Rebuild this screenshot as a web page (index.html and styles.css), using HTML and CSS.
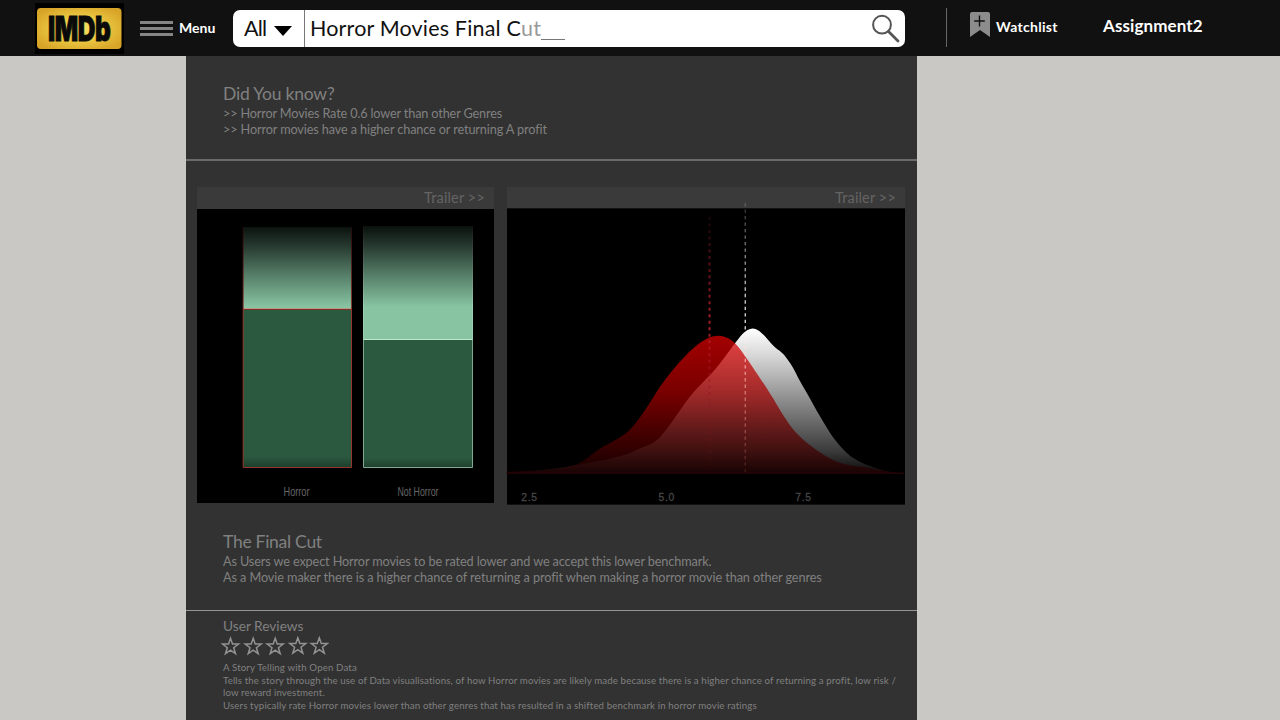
FILE: index.html
```
<!DOCTYPE html>
<html lang="en">
<head>
    <meta charset="UTF-8">
    <meta name="viewport" content="width=device-width, initial-scale=1.0">
    <title>Horror Movies Final Cut</title>
    <link rel="stylesheet" href="styles.css">
</head>
<body>
    <div class="header">
        <svg class="logo" width="89" height="51" viewBox="0 0 89 51">
            <defs>
                <radialGradient id="gold" cx="0.5" cy="0.5" r="0.6">
                    <stop offset="0" stop-color="#f8e468"/>
                    <stop offset="0.5" stop-color="#ebc842"/>
                    <stop offset="1" stop-color="#d8a428"/>
                </radialGradient>
            </defs>
            <rect width="89" height="51" fill="#000"/>
            <rect x="2" y="5" width="84.5" height="41" rx="4" fill="url(#gold)"/>
            <text class="logo-text" transform="translate(13 37.5) scale(0.72 1)">IMDb</text>
        </svg>
        <div class="menu">
            <div class="menu-icon"><span></span><span></span><span></span></div>
            <span class="menu-label">Menu</span>
        </div>
        <div class="search">
            <div class="search-type">
                <span class="search-all">All</span>
                <svg width="18" height="10" viewBox="0 0 18 10"><path d="M0 0H18L9 10Z" fill="#000"/></svg>
            </div>
            <div class="search-text"><span>Horror Movies Final C</span><span class="typing">ut</span><span class="cursor"></span></div>
            <svg class="search-icon" width="30" height="30" viewBox="0 0 30 30" fill="none" stroke="#555" stroke-linecap="round">
                <circle cx="11" cy="10.7" r="8.9" stroke-width="2"/>
                <path d="M17.5 17.5L27 27" stroke-width="2.8"/>
            </svg>
        </div>
        <div class="divider"></div>
        <div class="watchlist">
            <svg width="20" height="25" viewBox="0 0 20 25">
                <path d="M2 0H18Q20 0 20 2V25L10 18L0 25V2Q0 0 2 0Z" fill="#8c8c8c"/>
                <path d="M9.5 3.5V14.5M4.2 9H14.8" stroke="#111" stroke-width="1.4"/>
            </svg>
            <span class="watchlist-label">Watchlist</span>
        </div>
        <span class="account">Assignment2</span>
    </div>

    <div class="content">
        <div class="facts">
            <h2 class="title did">Did You know?</h2>
            <p class="line fact1">&gt;&gt; Horror Movies Rate 0.6 lower than other Genres</p>
            <p class="line fact2">&gt;&gt; Horror movies have a higher chance or returning A profit</p>
        </div>

        <div class="trailers">
            <div class="trailer trailer-bars">
                <div class="trailer-head"><span>Trailer &gt;&gt;</span></div>
                <svg class="chart" width="297" height="294" viewBox="0 0 297 294">
                    <defs>
                        <linearGradient id="fade" gradientUnits="userSpaceOnUse" x1="0" y1="17" x2="0" y2="98">
                            <stop offset="0" stop-color="#0a110d"/>
                            <stop offset="0.25" stop-color="#273a30"/>
                            <stop offset="0.6" stop-color="#557d67"/>
                            <stop offset="1" stop-color="#88c4a2"/>
                        </linearGradient>
                        <linearGradient id="redEdge" gradientUnits="userSpaceOnUse" x1="0" y1="17" x2="0" y2="98">
                            <stop offset="0" stop-color="#200a0a"/>
                            <stop offset="1" stop-color="#8c3a32"/>
                        </linearGradient>
                        <linearGradient id="whiteEdge" gradientUnits="userSpaceOnUse" x1="0" y1="17" x2="0" y2="98">
                            <stop offset="0" stop-color="#111"/>
                            <stop offset="1" stop-color="#a0d0b4"/>
                        </linearGradient>
                        <linearGradient id="base" x1="0" y1="0" x2="0" y2="1">
                            <stop offset="0.93" stop-color="#2b593f"/>
                            <stop offset="1" stop-color="#1f402d"/>
                        </linearGradient>
                    </defs>
                    <rect width="297" height="294" fill="#000"/>
                    <!-- horror -->
                    <rect x="46" y="18" width="109" height="82" fill="url(#fade)"/>
                    <rect x="46" y="101" width="109" height="157" fill="url(#base)"/>
                    <path d="M46 99.5H155" stroke="#b49a80"/>
                    <path d="M46 100.5H155" stroke="#7c302a"/>
                    <rect x="45.7" y="18" width="1" height="82" fill="url(#redEdge)"/>
                    <rect x="154" y="18" width="1" height="82" fill="url(#redEdge)"/>
                    <path d="M46.2 100V258.5H154.5V100" fill="none" stroke="#96342e"/>
                    <!-- not horror -->
                    <rect x="166" y="17" width="110" height="114" fill="url(#fade)"/>
                    <rect x="166" y="131" width="110" height="127" fill="url(#base)"/>
                    <path d="M166 130.5H276" stroke="#bfe6cf"/>
                    <rect x="166" y="17" width="1" height="114" fill="url(#whiteEdge)"/>
                    <rect x="275" y="17" width="1" height="114" fill="url(#whiteEdge)"/>
                    <path d="M166.5 131V258.5H275.5V131" fill="none" stroke="#80a890"/>
                    <text class="bar-label" x="86.5" y="286.5" textLength="26" lengthAdjust="spacingAndGlyphs">Horror</text>
                    <text class="bar-label" x="200.5" y="286.5" textLength="41" lengthAdjust="spacingAndGlyphs">Not Horror</text>
                </svg>
            </div>
            <div class="trailer trailer-density">
                <div class="trailer-head"><span>Trailer &gt;&gt;</span></div>
                <svg class="chart" width="399" height="297" viewBox="21 -336 1197 891">
                    <defs>
                        <linearGradient id="white" gradientUnits="userSpaceOnUse" x1="0" y1="25" x2="0" y2="460">
                            <stop offset="0" stop-color="#fff"/>
                            <stop offset="0.2" stop-color="#d4d4d4"/>
                            <stop offset="0.55" stop-color="#808080"/>
                            <stop offset="0.85" stop-color="#3a3a3a"/>
                            <stop offset="1" stop-color="#0c0c0c"/>
                        </linearGradient>
                        <linearGradient id="red" gradientUnits="userSpaceOnUse" x1="0" y1="45" x2="0" y2="460">
                            <stop offset="0" stop-color="#e00000"/>
                            <stop offset="0.4" stop-color="#a80000"/>
                            <stop offset="0.7" stop-color="#600000"/>
                            <stop offset="1" stop-color="#1e0000"/>
                        </linearGradient>
                        <linearGradient id="redLine" gradientUnits="userSpaceOnUse" x1="0" y1="-320" x2="0" y2="440">
                            <stop offset="0" stop-color="#c02030" stop-opacity="0.1"/>
                            <stop offset="0.45" stop-color="#c02030" stop-opacity="0.9"/>
                            <stop offset="0.6" stop-color="#a01828" stop-opacity="0.6"/>
                            <stop offset="1" stop-color="#701018" stop-opacity="0.1"/>
                        </linearGradient>
                        <linearGradient id="whiteLine" gradientUnits="userSpaceOnUse" x1="0" y1="-370" x2="0" y2="460">
                            <stop offset="0" stop-color="#fff" stop-opacity="0.15"/>
                            <stop offset="0.35" stop-color="#fff" stop-opacity="0.9"/>
                            <stop offset="0.47" stop-color="#fff" stop-opacity="1"/>
                            <stop offset="0.6" stop-color="#ffc8c0" stop-opacity="0.8"/>
                            <stop offset="1" stop-color="#ff9080" stop-opacity="0.15"/>
                        </linearGradient>
                    </defs>
                    <rect x="21" y="-336" width="1197" height="891" fill="#000"/>
                    <path fill="url(#white)" d="M20 459C100 456 170 448 230 436S350 418 400 396S452 376 472 361S535 280 560 245S620 178 640 156S690 92 705 72S738 25 760 25S805 59 820 75S846 93 857 108S880 138 890 160S925 222 940 250S975 310 990 335S1030 388 1050 406S1130 450 1180 458L1215 460V462H20Z"/>
                    <path fill="url(#red)" fill-opacity="0.73" d="M20 456C100 453 150 450 200 442S270 405 300 387S360 356 385 335S445 258 470 218S535 130 560 105S620 47 655 47S712 72 730 98S805 207 830 250S870 315 890 338S960 400 1000 420S1070 437 1110 444S1180 460 1215 460V462H20Z"/>
                    <path d="M21 460H1215" stroke="#2a0508" stroke-width="3"/>
                    <path d="M630 -310V440" stroke="url(#redLine)" stroke-width="6" stroke-dasharray="9 10.5"/>
                    <path d="M737.5 -352V460" stroke="url(#whiteLine)" stroke-width="3.5" stroke-dasharray="10 9.5"/>
                    <text class="tick" x="64" y="544" textLength="47">2.5</text>
                    <text class="tick" x="477" y="544" textLength="47">5.0</text>
                    <text class="tick" x="888" y="544" textLength="47">7.5</text>
                </svg>
            </div>
        </div>

        <div class="final">
            <h2 class="title cut">The Final Cut</h2>
            <p class="line final1">As Users we expect Horror movies to be rated lower and we accept this lower benchmark.</p>
            <p class="line final2">As a Movie maker there is a higher chance of returning a profit when making a horror movie than other genres</p>
        </div>

        <div class="reviews">
            <h3 class="reviews-title">User Reviews</h3>
            <svg class="stars" width="108" height="20" viewBox="0 0 108 20">
                <defs>
                    <path id="star" d="M0 -8.2L2 -2.5H8L3.2 1.2L5 7.2L0 3.7L-5 7.2L-3.2 1.2L-8 -2.5H-2Z" fill="none" stroke="#929292" stroke-width="1.5"/>
                </defs>
                <use href="#star" x="9.5" y="10.5"/>
                <use href="#star" x="32.2" y="10.5"/>
                <use href="#star" x="54.2" y="10.5"/>
                <use href="#star" x="76.8" y="10"/>
                <use href="#star" x="98.3" y="10"/>
            </svg>
            <p class="small">A Story Telling with Open Data</p>
            <p class="small">Tells the story through the use of Data visualisations, of how Horror movies are likely made because there is a higher chance of returning a profit, low risk /<br>low reward investment.</p>
            <p class="small">Users typically rate Horror movies lower than other genres that has resulted in a shifted benchmark in horror movie ratings</p>
        </div>
    </div>
</body>
</html>
```
FILE: styles.css
```
body {
    margin: 0;
    height: 720px;
    overflow: hidden;
    background-color: #c9c8c4;
    color: #808080;
    font-family: Lato, "Liberation Sans", sans-serif;
}

h2, h3, p {
    margin: 0;
    font-weight: normal;
    white-space: nowrap;
}

svg {
    display: block;
    flex-shrink: 0;
}

.header {
    display: flex;
    align-items: flex-start;
    height: 56px;
    box-sizing: border-box;
    padding: 3px 0 0 35px;
    background-color: #111;
    color: white;
    white-space: nowrap;
}

.logo {
    overflow: visible;
}

.logo-text {
    font-family: Inter, "Liberation Sans", sans-serif;
    font-weight: 900;
    font-size: 34px;
    letter-spacing: -0.5px;
    fill: #0a0a0a;
    stroke: #0a0a0a;
    stroke-width: 0.9px;
}

.menu {
    display: flex;
    width: 93px;
    margin-left: 16px;
    padding-top: 18px;
}

.menu-icon {
    display: flex;
    flex-direction: column;
    gap: 3px;
    width: 33px;
}

.menu-icon span {
    height: 3px;
    background-color: #858585;
}

.menu-label {
    margin: -3px 0 0 6px;
    font-size: 14px;
    font-weight: bold;
    line-height: 20px;
}

.search {
    display: flex;
    width: 672px;
    height: 37px;
    margin-top: 7px;
    border-radius: 7px;
    background-color: white;
    color: #111;
    font-size: 21.5px;
    line-height: 37px;
}

.search-type {
    display: flex;
    width: 72px;
    box-sizing: border-box;
    padding-left: 11px;
    border-right: 1px solid #777;
}

.search-type svg {
    margin: 16px 0 0 8px;
}

.search-all {
    width: 22px;
    letter-spacing: -0.8px;
}

.search-text {
    display: flex;
    flex: 1;
    padding-left: 5px;
    white-space: pre;
    letter-spacing: 0.17px;
}

.typing {
    color: #999;
}

.cursor {
    width: 24px;
    height: 1px;
    margin-top: 29px;
    background-color: #777;
}

.search-icon {
    margin: 4px 4px 0 0;
}

.divider {
    width: 1px;
    height: 39px;
    margin: 5px 0 0 41px;
    background-color: #666;
}

.watchlist {
    display: flex;
    width: 133px;
    margin: 9px 0 0 23px;
}

.watchlist-label {
    margin: 5px 0 0 6px;
    font-size: 14px;
    font-weight: bold;
    line-height: 20px;
    letter-spacing: 0.3px;
}

.account {
    margin-top: 11px;
    font-size: 17px;
    font-weight: bold;
    line-height: 24px;
    letter-spacing: 0.1px;
}

.content {
    width: 730.5px;
    height: 664px;
    margin-left: 186px;
    background-color: #323232;
}

.facts {
    height: 105px;
    box-sizing: border-box;
    padding: 27px 0 0 37px;
    border-bottom: 2px solid #6c6a6a;
}

.title {
    font-size: 17.5px;
    line-height: 22px;
}

.did {
    letter-spacing: -0.2px;
}

.cut {
    letter-spacing: -0.27px;
}

.line {
    font-size: 12.7px;
    line-height: 16px;
}

.fact1 {
    letter-spacing: -0.155px;
}

.fact2, .final1 {
    letter-spacing: -0.125px;
}

.final2 {
    letter-spacing: -0.09px;
}

.trailers {
    display: flex;
    gap: 13px;
    height: 344px;
    box-sizing: border-box;
    padding: 26px 0 0 11px;
}

.trailer-bars {
    width: 297px;
}

.trailer-density {
    width: 398px;
}

.trailer-head {
    height: 22px;
    box-sizing: border-box;
    padding-right: 9px;
    background-color: #3a3a3a;
    color: #646464;
    font-size: 14.5px;
    line-height: 21px;
    letter-spacing: 0.15px;
    text-align: right;
}

.trailer-density .trailer-head {
    height: 21px;
}

.trailer-density .chart {
    width: 398px;
    overflow: visible;
}

.bar-label {
    fill: #666;
    font-family: "Liberation Sans", sans-serif;
    font-size: 13px;
}

.tick {
    fill: #484848;
    stroke: #484848;
    stroke-width: 0.8px;
    font-family: "Liberation Sans", sans-serif;
    font-size: 31px;
}

.final {
    height: 106px;
    box-sizing: border-box;
    padding: 26px 0 0 37px;
    border-bottom: 1px solid #959595;
}

.reviews {
    padding: 6px 0 0 37px;
}

.reviews-title {
    height: 19px;
    font-size: 13.7px;
    line-height: 18px;
}

.stars {
    margin: 0 0 5px -2px;
}

.small {
    font-size: 9.7px;
    line-height: 12.7px;
    letter-spacing: 0.125px;
}
```
